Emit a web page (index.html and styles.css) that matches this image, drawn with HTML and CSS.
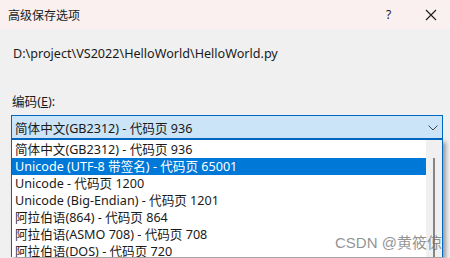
FILE: index.html
```html
<!DOCTYPE html>
<html lang="zh-CN">
<head>
	<meta charset="UTF-8">
	<title>高级保存选项</title>
	<link rel="stylesheet" href="styles.css">
</head>
<body>
	<div class="dialog">
		<div class="titlebar">
			<span class="title">高级保存选项</span>
			<span class="help">?</span>
			<span class="close">
				<svg width="12" height="12" viewBox="0 0 12 12"><path d="M1 1L11 11M11 1L1 11" stroke="#1a1a1a" stroke-width="1.1" fill="none"/></svg>
			</span>
		</div>
		<div class="content">
			<div class="path">D:\project\VS2022\HelloWorld\HelloWorld.py</div>
			<div class="label">编码(<u>E</u>):</div>
			<div class="combo">
				<div class="combo-box">
					<span>简体中文(GB2312) - 代码页 936</span>
					<svg class="chevron" width="10" height="6" viewBox="0 0 10 6"><path d="M0.5 0.5L5 5L9.5 0.5" stroke="#444" stroke-width="1" fill="none"/></svg>
				</div>
				<div class="list">
					<div class="items">
						<div class="item">简体中文(GB2312) - 代码页 936</div>
						<div class="item selected">Unicode (UTF-8 带签名) - 代码页 65001</div>
						<div class="item">Unicode - 代码页 1200</div>
						<div class="item">Unicode (Big-Endian) - 代码页 1201</div>
						<div class="item">阿拉伯语(864) - 代码页 864</div>
						<div class="item">阿拉伯语(ASMO 708) - 代码页 708</div>
						<div class="item">阿拉伯语(DOS) - 代码页 720</div>
					</div>
					<div class="scrollbar"><div class="thumb"></div></div>
				</div>
			</div>
		</div>
		<div class="watermark">CSDN @黄筱倞</div>
	</div>
</body>
</html>
```
FILE: styles.css
```css
html, body {
	margin: 0;
	padding: 0;
}
body {
	width: 450px;
	height: 258px;
	overflow: hidden;
	background: #f0f0f0;
	font-family: "Noto Sans", "Noto Sans CJK SC", sans-serif;
	font-size: 12.6px;
	color: #1a1a1a;
}
.dialog {
	position: relative;
	height: 258px;
	overflow: hidden;
}
.titlebar {
	height: 29px;
	background: #f9f0ef;
	display: flex;
	align-items: center;
}
.title {
	margin-left: 8px;
	font-size: 12px;
	flex: 1;
}
.help {
	width: 12px;
	font-size: 12px;
	margin-right: 27px;
}
.close {
	display: flex;
	margin-right: 13px;
}
.content {
	padding: 16px 7px 0 11px;
}
.path {
	padding-left: 2px;
	height: 17px;
	line-height: 17px;
}
.label {
	margin-top: 31px;
	padding-left: 1px;
	height: 17px;
	line-height: 17px;
}
.combo {
	position: relative;
	margin-top: 5px;
}
.combo-box {
	height: 22px;
	border: 1px solid #0067c0;
	background: #cce4f7;
	display: flex;
	align-items: center;
	padding: 0 4px 0 3px;
}
.combo-box span {
	flex: 1;
}
.chevron {
	margin-top: 1px;
}
.list {
	position: absolute;
	left: 0;
	top: 24px;
	width: 430px;
	height: 117px;
	background: #fff;
	border: 1px solid #0067c0;
	border-bottom: none;
	box-shadow: 3px 3px 4px rgba(0, 0, 0, 0.35);
	display: flex;
	overflow: hidden;
}
.items {
	flex: 1;
	padding-top: 1px;
	overflow: hidden;
}
.item {
	height: 17px;
	line-height: 17px;
	padding-left: 3px;
	white-space: nowrap;
}
.item.selected {
	background: #0078d7;
	color: #fff;
}
.scrollbar {
	width: 16px;
	background: #f0f0f0;
	position: relative;
}
.thumb {
	position: absolute;
	left: 7px;
	top: 18px;
	width: 2px;
	bottom: 0;
	background: #858585;
}
.watermark {
	position: absolute;
	left: 335px;
	top: 231px;
	font-size: 15px;
	color: rgba(110, 110, 110, 0.75);
	font-family: "Liberation Sans", "Noto Sans CJK SC", sans-serif;
}
```
